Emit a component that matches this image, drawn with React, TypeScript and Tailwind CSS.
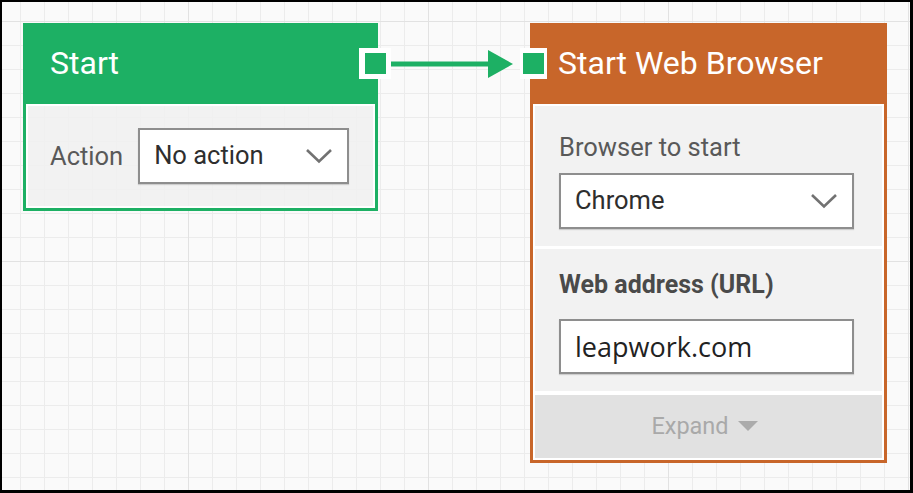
function Chevron() {
  return (
    <svg width="28" height="16" viewBox="0 0 28 16" className="shrink-0">
      <polyline points="2,2 14,13.5 26,2" fill="none" stroke="#727272" strokeWidth="2.6" />
    </svg>
  );
}

function Select({ value, width }: { value: string; width: string }) {
  return (
    <div
      className={`flex h-[56px] ${width} items-center justify-between border-2 border-[#8e8e8e] bg-white pl-[14px] pr-[14px] shadow-[0_1px_1px_rgba(0,0,0,0.15)]`}
    >
      <span className="text-[25.5px] leading-none text-[#2e2e2e]">{value}</span>
      <Chevron />
    </div>
  );
}

function Port({ className }: { className: string }) {
  return (
    <div className={`absolute z-20 flex items-center justify-center bg-white ${className}`}>
      <div className="h-[21px] w-[21px] bg-[#1db064]" />
    </div>
  );
}

export default function App() {
  return (
    <div className="h-[493px] w-[913px] border-t-2 border-r-[3px] border-b-[3px] border-l-2 border-black font-['Roboto',sans-serif]">
      <div className="relative h-full w-full overflow-hidden bg-[#fafafa] bg-[linear-gradient(to_right,#e2e2e2_1px,transparent_1px),linear-gradient(to_bottom,#e2e2e2_1px,transparent_1px),linear-gradient(to_right,#ececec_1px,transparent_1px),linear-gradient(to_bottom,#ececec_1px,transparent_1px)] bg-[size:240px_240px,240px_240px,24px_24px,24px_24px] bg-[position:186px_0,0_19px,18px_0,0_19px]">
        {/* Start node */}
        <div className="absolute top-[21px] left-[21px] flex h-[188px] w-[355px] flex-col border-[3px] border-[#1db064]">
          <div className="flex h-[78px] items-center bg-[#1db064] pb-[4px] pl-[24px] text-[32px] text-white">
            Start
          </div>
          <div className="flex flex-1 items-center gap-[15px] border-2 border-white bg-[#f1f1f1]/90 pl-[22px]">
            <span className="text-[25.5px] text-[#595959]">Action</span>
            <Select value="No action" width="w-[211px]" />
          </div>
        </div>

        {/* Start Web Browser node */}
        <div className="absolute top-[21px] left-[528px] flex w-[357px] flex-col border-[3px] border-[#c8662a]">
          <div className="flex h-[78px] items-center bg-[#c8662a] pb-[4px] pl-[25px] text-[32px] text-white">
            Start Web Browser
          </div>
          <div className="flex flex-col border-2 border-white bg-white">
            <div className="flex h-[140px] flex-col bg-[#f1f1f1]/90 pt-[26px] pl-[24px]">
              <span className="h-[30px] text-[25.5px] leading-[30px] text-[#595959]">Browser to start</span>
              <div className="mt-[11px]">
                <Select value="Chrome" width="w-[295px]" />
              </div>
            </div>
            <div className="mt-[3px] flex h-[142px] flex-col bg-[#f1f1f1]/90 pt-[21px] pl-[24px]">
              <span className="h-[30px] text-[25px] leading-[30px] font-bold text-[#4a4a4a]">Web address (URL)</span>
              <div className="mt-[19px] flex h-[55px] w-[295px] items-center border-2 border-[#8e8e8e] bg-white pl-[14px] shadow-[0_1px_1px_rgba(0,0,0,0.15)]">
                <span className="font-['Open_Sans',sans-serif] text-[27px] leading-none text-[#222]">leapwork.com</span>
              </div>
            </div>
            <div className="mt-[4px] flex h-[63px] items-center justify-center gap-[9px] bg-[#e1e1e1] pr-[8px]">
              <span className="text-[23.5px] text-[#a9a9a9]">Expand</span>
              <svg width="20" height="11" viewBox="0 0 20 11">
                <polygon points="0,0 20,0 10,10" fill="#ababab" />
              </svg>
            </div>
          </div>
        </div>

        {/* Ports */}
        <Port className="top-[46px] left-[357px] h-[31px] w-[32px]" />
        <Port className="top-[46px] left-[518px] h-[31px] w-[27px]" />

        {/* Connection */}
        <svg className="pointer-events-none absolute top-0 left-0 z-10 h-full w-full">
          <line x1="389" y1="62" x2="490" y2="62" stroke="#1db064" strokeWidth="5" />
          <polygon points="486,48 511,62 486,76" fill="#1db064" />
        </svg>
      </div>
    </div>
  );
}
